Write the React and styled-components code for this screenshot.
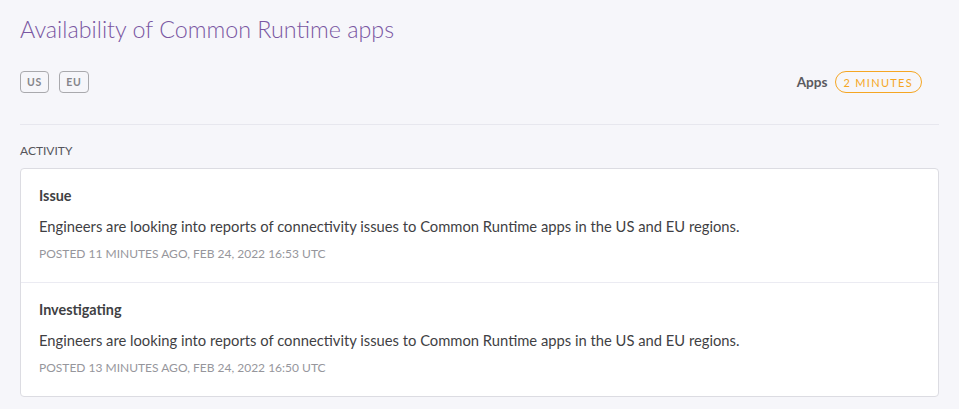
import React from "react"
import styled, { createGlobalStyle } from "styled-components"

const GlobalStyle = createGlobalStyle`
  html, body {
    margin: 0;
    padding: 0;
    background: #f6f6fa;
  }
  body {
    font-family: Lato, "Open Sans", sans-serif;
    color: #3f3f44;
  }
`

const updates = [
  {
    title: "Issue",
    body: "Engineers are looking into reports of connectivity issues to Common Runtime apps in the US and EU regions.",
    posted: "Posted 11 minutes ago, Feb 24, 2022 16:53 UTC",
  },
  {
    title: "Investigating",
    body: "Engineers are looking into reports of connectivity issues to Common Runtime apps in the US and EU regions.",
    posted: "Posted 13 minutes ago, Feb 24, 2022 16:50 UTC",
  },
]

const App = () => {
  return (
    <Page>
      <GlobalStyle />
      <Title>Availability of Common Runtime apps</Title>
      <MetaRow>
        <Regions>
          <RegionTag>US</RegionTag>
          <RegionTag>EU</RegionTag>
        </Regions>
        <Affected>
          <AffectedLabel>Apps</AffectedLabel>
          <DurationBadge>2 minutes</DurationBadge>
        </Affected>
      </MetaRow>
      <Divider />
      <SectionLabel>Activity</SectionLabel>
      <Card>
        {updates.map((u) => (
          <Update key={u.posted}>
            <UpdateTitle>{u.title}</UpdateTitle>
            <UpdateBody>{u.body}</UpdateBody>
            <Posted>{u.posted}</Posted>
          </Update>
        ))}
      </Card>
    </Page>
  )
}

export default App

const Page = styled.div`
  padding: 14px 20px 12px 20px;
`

const Title = styled.h1`
  margin: 0;
  font-family: Lato, sans-serif;
  font-weight: 300;
  font-size: 23.3px;
  line-height: 30px;
  color: #7a57a2;
`

const MetaRow = styled.div`
  display: flex;
  align-items: center;
  justify-content: space-between;
  margin-top: 27px;
  padding-right: 17px;
`

const Regions = styled.div`
  display: flex;
  gap: 10px;
`

const RegionTag = styled.span`
  box-sizing: border-box;
  height: 22px;
  padding: 0 6px;
  display: inline-flex;
  align-items: center;
  border: 1px solid #a9a9ad;
  border-radius: 4px;
  font-size: 10.5px;
  font-weight: 700;
  letter-spacing: 0.8px;
  color: #85858b;
`

const Affected = styled.div`
  display: flex;
  align-items: center;
  gap: 7px;
`

const AffectedLabel = styled.span`
  font-size: 13.6px;
  font-weight: 700;
  color: #5a5a60;
`

const DurationBadge = styled.span`
  box-sizing: border-box;
  height: 22px;
  padding: 0 8px;
  display: inline-flex;
  align-items: center;
  border: 1px solid #f5a623;
  border-radius: 11px;
  font-size: 11px;
  letter-spacing: 1.3px;
  text-transform: uppercase;
  color: #f5a623;
`

const Divider = styled.hr`
  margin: 31px 0 0 0;
  border: 0;
  border-top: 1px solid #e7e7ee;
`

const SectionLabel = styled.div`
  margin-top: 18px;
  font-size: 12px;
  text-transform: uppercase;
  color: #55555a;
`

const Card = styled.div`
  margin-top: 10px;
  background: #fff;
  border: 1px solid #dcdce2;
  border-radius: 4px;
`

const Update = styled.div`
  padding: 18px 18px 21px 18px;
  & + & {
    border-top: 1px solid #ebebf2;
  }
`

const UpdateTitle = styled.div`
  font-size: 14.4px;
  font-weight: 700;
  line-height: 18px;
  color: #3f3f44;
`

const UpdateBody = styled.p`
  margin: 12px 0 0 0;
  font-size: 14.75px;
  line-height: 18px;
  color: #3f3f44;
`

const Posted = styled.div`
  margin-top: 12px;
  font-size: 12px;
  line-height: 14px;
  text-transform: uppercase;
  color: #96969c;
`
